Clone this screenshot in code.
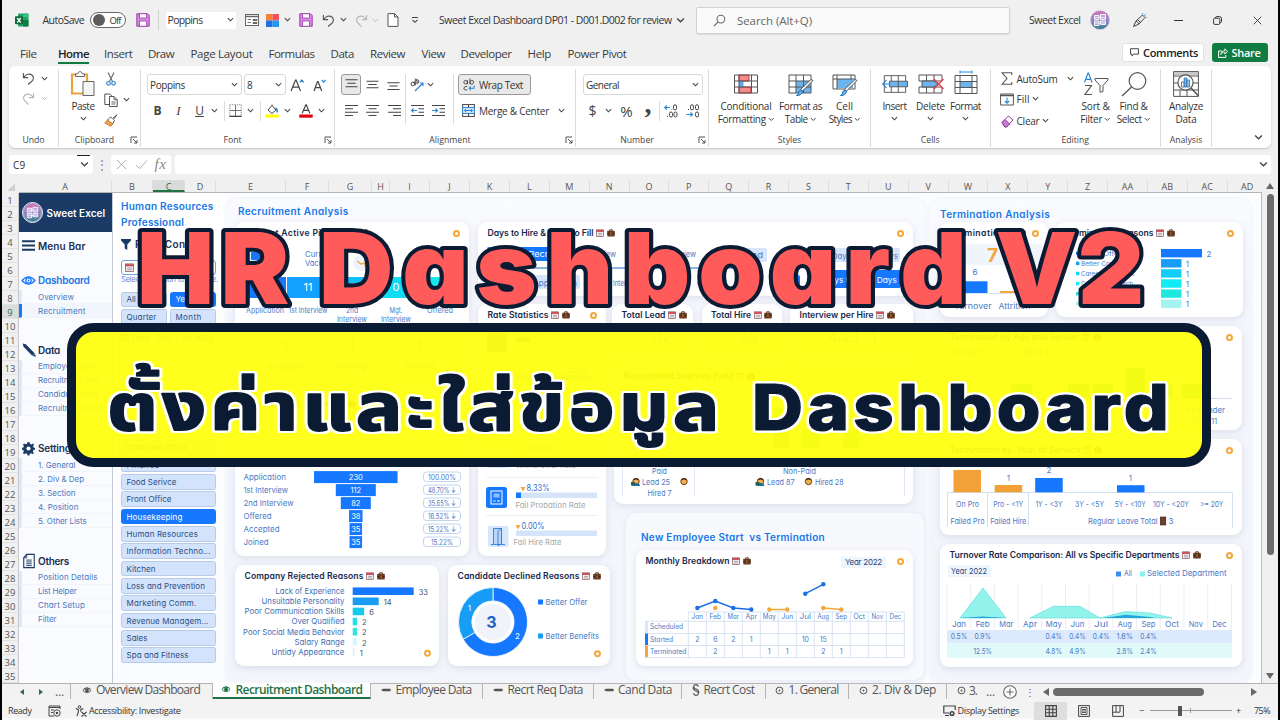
<!DOCTYPE html>
<html lang="th">
<head>
<meta charset="utf-8">
<title>HR Dashboard V2</title>
<style>
    html, body {
        margin: 0;
        padding: 0;
        overflow: hidden;
        background: #000;
    }
</style>
</head>
<body>
<excel-window>
    <title-bar></title-bar>
    <menu-tabs></menu-tabs>
    <excel-ribbon></excel-ribbon>
    <formula-bar></formula-bar>
    <work-sheet></work-sheet>
    <sheet-tabs></sheet-tabs>
    <status-bar></status-bar>
    <cover-title slot="overlay"></cover-title>
</excel-window>

<script>
const UI_FONT = '"Open Sans", "Noto Sans", sans-serif';
const DASH_FONT = 'Inter, "Open Sans", sans-serif';

// Base class: subclasses return css() and html(), rendered once on connect
class BaseElement extends HTMLElement {
    constructor() {
        super();
        this.attachShadow({ mode: 'open' });
    }

    connectedCallback() {
        this.shadowRoot.innerHTML = `<style>${this.css()}</style>${this.html()}`;
    }

    css() { return ':host { display: block; }'; }
    html() { return '<slot></slot>'; }
}

/* ---------- icons ---------- */

const G = '#444';
const B = '#2b88d8';
const ICONS = {
    excel: ['0 0 14 14', `<rect x="3" y=".5" width="10.5" height="13" rx="1" fill="#21a366"/><path d="M8 .5h4.5a1 1 0 0 1 1 1V4H8z" fill="#33c481"/><path d="M8 7h5.500v5.500a1 1 0 0 1-1 1H8z" fill="#107c41"/><rect x="0" y="3.200" width="8" height="8" rx=".8" fill="#0b6a37"/><path d="M2.200 5l3.600 4.600M5.800 5L2.200 9.600" stroke="#fff" stroke-width="1.300"/>`],
    save: ['0 0 14 14', `<path d="M.8.800h10.700l1.700 1.700v10.700H.8z" fill="#d78be0" stroke="#9a3fa8"/><rect x="3.500" y=".8" width="7" height="4.200" fill="#fff" stroke="#9a3fa8" stroke-width=".8"/><rect x="3.500" y="8" width="7" height="5.200" fill="#fff" stroke="#9a3fa8" stroke-width=".8"/>`],
    form: ['0 0 14 14', `<rect x=".5" y="1.500" width="13" height="11" fill="#fff" stroke="#666"/><path d="M.5 3.500h13" stroke="#666" stroke-width="1.500"/><path d="M2.500 6.500h3.500M2.500 9.500h3.500M8 6.500h4v1h-4zM8 9.500h4v1H8z" stroke="#666" stroke-width=".9"/>`],
    colors: ['0 0 14 14', `<path d="M0 0h7v7H0z" fill="#f58235"/><path d="M7 0h7v7H7z" fill="#f4525a"/><path d="M0 7h7v7H0z" fill="#1e6fe0"/><path d="M7 7h7v7H7z" fill="#2196f3"/>`],
    chev: ['0 0 8 6', `<path d="M1 1.300l3 3 3-3" fill="none" stroke="${G}" stroke-width="1.200"/>`],
    chevgray: ['0 0 8 6', `<path d="M1 1.300l3 3 3-3" fill="none" stroke="#bbb" stroke-width="1.200"/>`],
    undo: ['0 0 14 14', `<path d="M1.500 1v5h5M1.800 5.800C4 2.500 8 1 11 3.500c2.500 2.500 1 5.500-1 7L6.500 13.500" fill="none" stroke="#555" stroke-width="1.200"/>`],
    redo: ['0 0 14 14', `<path d="M12.500 1v5h-5M12.200 5.800C10 2.500 6 1 3 3.500c-2.500 2.500-1 5.500 1 7L7 13.500" fill="none" stroke="#b5b5b5" stroke-width="1.200"/>`],
    page: ['0 0 12 14', `<path d="M1 .6h6.500L11 4v9.400H1z" fill="#fff" stroke="#555"/><path d="M7.500.600V4H11" fill="none" stroke="#555"/>`],
    custom: ['0 0 8 8', `<path d="M1 1.500h6" stroke="${G}"/><path d="M1.500 3.800L4 6.300l2.500-2.500" fill="none" stroke="${G}" stroke-width="1.100"/>`],
    search: ['0 0 14 14', `<circle cx="8.500" cy="5.500" r="4.200" fill="none" stroke="#666" stroke-width="1.100"/><path d="M5.300 8.700L1 13" stroke="#666" stroke-width="1.200"/>`],
    avatar: ['0 0 20 20', `<defs><linearGradient id="av" x2="0" y2="1"><stop stop-color="#d873b8"/><stop offset=".55" stop-color="#8a86c2"/><stop offset="1" stop-color="#2f7f8e"/></linearGradient></defs><circle cx="10" cy="10" r="9.600" fill="url(#av)" stroke="#d9cfe6" stroke-width=".7"/><path d="M4.500 5.500h4.500v4H4.500zM10.500 4.500h5v5h-5zM4.500 11h4.500v4.500H4.500zM10.500 11h5v3.500h-5z" fill="#b9a5d8" stroke="#fff" stroke-width=".9"/><path d="M5 13h10M5 7.500h10" stroke="#fff" stroke-width=".7"/>`],
    pen: ['0 0 15 15', `<path d="M1.500 13.500L4 8l6.500-6 2.500 2.500L7 11zM4 8q1.500.5 3 3M5.500 6.800q2 .8 3 2.800" fill="none" stroke="${G}"/><path d="M10.500 1.500l.3-1.500M12 3l2-2.200M13.200 4.500h1.800" stroke="#55a8e0"/>`],
    min: ['0 0 9 9', `<path d="M0 4.500h9" stroke="#333"/>`],
    restore: ['0 0 9 9', `<rect x=".6" y="2.200" width="6.200" height="6.200" rx="1.200" fill="none" stroke="#333"/><path d="M2.500 1.800Q2.500.600 3.700.600H6.500Q8.500.600 8.500 2.500V5.400Q8.500 6.600 7.300 6.700" fill="none" stroke="#333"/>`],
    close: ['0 0 10 10', `<path d="M.8.800l8.400 8.400M9.200.800L.8 9.200" stroke="#333"/>`],
    comment: ['0 0 10 10', `<path d="M.6.800h8.800v6H4.200L2.200 9V6.800H.6z" fill="none" stroke="#333"/>`],
    share: ['0 0 10 10', `<path d="M4 3H.6v6.400h7.200V7" fill="none" stroke="#fff"/><path d="M2.800 6.500c.4-2.500 2-3.800 4-3.800V.800L9.600 3.500 6.800 6V4.200C5 4.200 3.600 5 2.800 6.500z" fill="none" stroke="#fff" stroke-width=".9"/>`],
    paste: ['0 0 26 26', `<path d="M2 3.500h15v19H2z" fill="#fff" stroke="#e8a33d" stroke-width="2.200"/><path d="M5.500 5.500V3h2q1-2.500 2.500-2.500T12.500 3h2v2.500z" fill="#fff" stroke="#666"/><path d="M13 10.500h11v14H13z" fill="#f6f6f6" stroke="#666"/>`],
    cut: ['0 0 10 14', `<path d="M2 .5l4.500 9M8 .5l-4.500 9" stroke="#666" stroke-width="1.100"/><circle cx="2.500" cy="11.300" r="1.800" fill="none" stroke="${B}" stroke-width="1.200"/><circle cx="7.500" cy="11.300" r="1.800" fill="none" stroke="${B}" stroke-width="1.200"/>`],
    copy: ['0 0 14 14', `<path d="M5 11.500H.8V1h5l2 2" fill="none" stroke="#555"/><path d="M5.500 3.500h4.500l3.200 3.200v6.800H5.500z" fill="#fff" stroke="#555"/><path d="M10 3.500v3.200h3.200M7.500 9h4M7.500 11h4" fill="none" stroke="#555" stroke-width=".9"/>`],
    painter: ['0 0 14 13', `<path d="M13 .8L8.500 4.500 6.500 3 3.500 6l5 4 2-3.500-1-1z" fill="#fff" stroke="#555"/><path d="M3.500 6L.8 9l6 3.300L8.500 10z" fill="#f2a65a" stroke="#d87a1a"/>`],
    growA: ['0 0 14 14', `<path d="M1 13L5.500 2h.6L10.500 13M2.600 9.200h6.300" fill="none" stroke="${G}" stroke-width="1.200"/><path d="M9.800 4.300L11.800 2l2 2.300" fill="none" stroke="${B}" stroke-width="1.200"/>`],
    shrinkA: ['0 0 14 14', `<path d="M2 13L5.500 3.500h.6L9.700 13M3.200 9.700h5.300" fill="none" stroke="${G}" stroke-width="1.200"/><path d="M9.800 2l1.900 2.200L13.600 2" fill="none" stroke="${B}" stroke-width="1.200"/>`],
    borders: ['0 0 14 14', `<path d="M.8.800h12.400v12.400H.8z" fill="none" stroke="#888" stroke-dasharray="1.500 1"/><path d="M7 1v12M1 7h12" stroke="#666"/><path d="M.5 13.300h13" stroke="#333" stroke-width="1.200"/>`],
    fill: ['0 0 14 14', `<path d="M3 6l4-4.500 4 4.500-4 3.500zM7 1.500V.5" fill="#fff" stroke="${G}"/><path d="M10.500 4q2 1 1.800 4.500" fill="none" stroke="${B}" stroke-width="1.500"/><path d="M.3 10.500h13.400v3.200H.3z" fill="#ffff00"/>`],
    fontcolor: ['0 0 14 14', `<path d="M3.200 9.300L6.800.800h.5l3.500 8.500M4.500 6.300h5" fill="none" stroke="${G}" stroke-width="1.200"/><path d="M.3 10.500h13.400v3.200H.3z" fill="#e3000f"/>`],
    vtop: ['0 0 14 14', `<path d="M.5 2h13M2.500 5.700h9M.5 9.300h13" stroke="${G}" stroke-width="1.100"/>`],
    vmid: ['0 0 14 14', `<path d="M.5 3.500h13M2.500 7h9M.5 10.500h13" stroke="${G}" stroke-width="1.100"/>`],
    vbot: ['0 0 14 14', `<path d="M.5 5h13M2.500 8.700h9M.5 12.300h13" stroke="${G}" stroke-width="1.100"/>`],
    left: ['0 0 13 13', `<path d="M0 1.500h13M0 4.800h8M0 8.200h13M0 11.500h8" stroke="${G}" stroke-width="1.100"/>`],
    center: ['0 0 13 13', `<path d="M0 1.500h13M2.500 4.800h8M0 8.200h13M2.500 11.500h8" stroke="${G}" stroke-width="1.100"/>`],
    right: ['0 0 13 13', `<path d="M0 1.500h13M5 4.800h8M0 8.200h13M5 11.500h8" stroke="${G}" stroke-width="1.100"/>`],
    orient: ['0 0 14 14', `<path d="M5 13L13 5M13 8V5h-3" fill="none" stroke="${B}" stroke-width="1.200"/><circle cx="2.800" cy="6" r="1.800" fill="none" stroke="${G}"/><circle cx="7" cy="3.500" r="1.800" fill="none" stroke="${G}"/><path d="M4.300 3.300l1.500 4M5 .5l3.200 4.500" stroke="${G}"/>`],
    outdent: ['0 0 13 13', `<path d="M0 1.500h13M7.500 4.800H13M7.500 8.200H13M0 11.500h13" stroke="${G}" stroke-width="1.100"/><path d="M6 6.500H.5M2.500 4.500l-2 2 2 2" fill="none" stroke="${B}" stroke-width="1.100"/>`],
    indent: ['0 0 13 13', `<path d="M0 1.500h13M7.500 4.800H13M7.500 8.200H13M0 11.500h13" stroke="${G}" stroke-width="1.100"/><path d="M0 6.500h5.500M3.500 4.500l2 2-2 2" fill="none" stroke="${B}" stroke-width="1.100"/>`],
    wrap: ['0 0 13 14', `<circle cx="2.800" cy="4.500" r="1.900" fill="none" stroke="${G}"/><path d="M4.900 2.500v4.200M7.500.500v6.200" stroke="${G}"/><circle cx="9.500" cy="4.600" r="2" fill="none" stroke="${G}"/><path d="M4.500 9.300q-3-1-3.500 1.500t3.500 2" fill="none" stroke="${G}"/><path d="M12 8v3H6.500M8.500 9l-2 2 2 2" fill="none" stroke="${B}" stroke-width="1.100"/>`],
    merge: ['0 0 13 13', `<rect x=".6" y=".6" width="11.800" height="11.800" fill="#fff" stroke="${G}"/><path d="M.6 3.500h11.800v6H.6z" fill="#cfe6fa" stroke="${B}"/><path d="M6.500.600v2.900M6.500 9.500v3" stroke="${G}"/><path d="M2.500 6.500h8M4 5L2.500 6.500 4 8M9 5l1.500 1.500L9 8" fill="none" stroke="${B}"/>`],
    decinc: ['0 0 14 14', `<path d="M6 3.500H.8M2.800 1.500l-2 2 2 2" fill="none" stroke="${B}" stroke-width="1.200"/><rect x="9.500" y=".8" width="3" height="5" rx="1.500" fill="none" stroke="${G}"/><rect x="5.500" y="8" width="3" height="5" rx="1.500" fill="none" stroke="${G}"/><rect x="10" y="8" width="3" height="5" rx="1.500" fill="none" stroke="${G}"/><path d="M3 12.500h1M7.500 5.500h.8" stroke="${G}"/>`],
    decdec: ['0 0 14 14', `<path d="M.5 10.500h6M4.500 8.500l2 2-2 2" fill="none" stroke="${B}" stroke-width="1.200"/><rect x="4.500" y=".8" width="3" height="5" rx="1.500" fill="none" stroke="${G}"/><rect x="9.500" y=".8" width="3" height="5" rx="1.500" fill="none" stroke="${G}"/><rect x="9.500" y="8" width="3" height="5" rx="1.500" fill="none" stroke="${G}"/><path d="M2 5.500h1" stroke="${G}"/>`],
    condfmt: ['0 0 26 26', `<path d="M1.500 4h23v18h-23z" fill="#fff"/><path d="M6 4h10v6H6zM6 16h12v6H6z" fill="#f48a8a" stroke="#d13438"/><path d="M6 10h4.500v6H6z" fill="#5aa9ea"/><path d="M1.500 4h23v18h-23zM1.500 10h23M1.500 16h23M6 4v18M18.500 4v18" fill="none" stroke="#555"/>`],
    fmttable: ['0 0 26 26', `<path d="M1 4h22v18H1z" fill="#fff"/><path d="M8 10h15v12H8z" fill="#6cb4ee"/><path d="M1 4h22v18H1zM1 10h22M1 16h22M8 4v18M15.500 4v18" fill="none" stroke="#555"/><path d="M25 9.500L14.500 20l-2-1.500L23 8.500z" fill="#fff" stroke="#555"/><path d="M14.500 20q-1 5-6 4.500 2.500-1 2.500-4 1-2.500 3.500-.5z" fill="#6cb4ee" stroke="#1d6fb8"/>`],
    cellstyle: ['0 0 26 26', `<path d="M1 4h22v18H1z" fill="#fff"/><path d="M5 8h16v9H5z" fill="#6cb4ee"/><path d="M1 4h22v14H1zM1 8h22M5 4v14M19 4v4" fill="none" stroke="#555"/><path d="M25 9.500L14.500 20l-2-1.500L23 8.500z" fill="#fff" stroke="#555"/><path d="M14.500 20q-1 5-6 4.500 2.500-1 2.500-4 1-2.500 3.500-.5z" fill="#6cb4ee" stroke="#1d6fb8"/>`],
    insert: ['0 0 28 26', `<path d="M2.500 4h24v18h-24z" fill="#fff"/><path d="M2.500 4h23v18h-23zM10 4v18M17.500 4v18" fill="none" stroke="#555"/><path d="M8 10h19.500v6H8z" fill="#6cb4ee" stroke="#555"/><path d="M17.500 10v6" stroke="#555"/><path d="M8 13H1M5 8.500L.8 13 5 17.500" fill="none" stroke="#2b88d8" stroke-width="1.200"/>`],
    delete: ['0 0 26 26', `<path d="M1 4h23v6H1zM1 16h23v6H1zM8.500 4v6M16 4v6M8.500 16v6M16 16v6" fill="#fff" stroke="#555"/><path d="M4 10h12l4 3-4 3H4z" fill="#6cb4ee" stroke="#555"/><path d="M16 8l9.500 10M25.500 8L16 18" stroke="#e8414d" stroke-width="1.300"/>`],
    format: ['0 0 26 26', `<path d="M2 4.500h22v18H2z" fill="#fff"/><path d="M7 10.500h12v6H7z" fill="#6cb4ee"/><path d="M2 4.500h22v18H2zM2 10.500h22M2 16.500h22M7 4.500v18M19 4.500v18" fill="none" stroke="#555"/><path d="M7 1h12M7-.5v3M19-.5v3" stroke="#2b88d8"/>`],
    sum: ['0 0 12 13', `<path d="M10.800 3V.8H1.200L6 6.500l-4.800 5.700h9.600V10" fill="none" stroke="#555" stroke-width="1.100"/>`],
    filldown: ['0 0 14 13', `<path d="M.6 1h12.800v11H.6z" fill="#fff" stroke="#555"/><path d="M.6 2.500h12.800" stroke="#555" stroke-width="1.500"/><path d="M7 4.500v6M4.800 8L7 10.300 9.200 8" fill="none" stroke="${B}" stroke-width="1.100"/>`],
    clear: ['0 0 13 13', `<path d="M1 7.500L7.500 1l4.500 4-6.500 7H4z" fill="#fff" stroke="#8a3a9a"/><path d="M1 7.500l3-3L8.500 9l-3 3H4z" fill="#c77fd2" stroke="#8a3a9a"/>`],
    sort: ['0 0 26 26', `<path d="M1.500 11.500L5 2h.5L9 11.500M2.700 8.300h5" fill="none" stroke="${B}" stroke-width="1.200"/><path d="M2 14.500h6.500L2 23.500h7" fill="none" stroke="#555" stroke-width="1.200"/><path d="M12 7.500h13v1.500l-5 5.500v6l-3 .8v-6.800L12 9z" fill="#fff" stroke="#555"/>`],
    find: ['0 0 26 26', `<circle cx="16.500" cy="10" r="8.300" fill="#fff" stroke="#555" stroke-width="1.200"/><path d="M10.500 16L1 25" stroke="#555" stroke-width="1.300"/>`],
    analyze: ['0 0 26 26', `<path d="M.6.600h24.800v24.800H.6z" fill="#fff" stroke="#555"/><path d="M1 2.500h24" stroke="#c8c8c8" stroke-width="3"/><path d="M.6 5h24.800M.6 12h24.800M.6 19h24.800M7 19v6M14 19v6" stroke="#555"/><circle cx="12.500" cy="11.500" r="7.600" fill="#fff" stroke="#555" stroke-width="1.200"/><path d="M8.500 11h2.600v5H8.500z" fill="#fff" stroke="#555" stroke-width=".8"/><path d="M11.200 7h2.600v9h-2.600z" fill="#6cb4ee" stroke="#2b6cb0" stroke-width=".8"/><path d="M14 9h2.500v7H14z" fill="#9ccbf2" stroke="#2b6cb0" stroke-width=".8"/><path d="M18 17l7.500 8" stroke="#555" stroke-width="1.600"/>`],
    launch: ['0 0 8 8', `<path d="M1 7V1h6" fill="none" stroke="#555"/><path d="M3 3l4 4M7 4v3H4" fill="none" stroke="#555"/>`],
    cross: ['0 0 12 12', `<path d="M1 1l10 10M11 1L1 11" stroke="#a8a8a8"/>`],
    tick: ['0 0 14 12', `<path d="M1 6.500l4 4L13 1.500" fill="none" stroke="#a8a8a8"/>`],
    eye: ['0 0 16 10', `<path d="M.8 5Q8-3 15.200 5 8 13 .8 5z" fill="#fff" stroke="#1677ff" stroke-width="1.400"/><circle cx="8" cy="5" r="3" fill="none" stroke="#1677ff" stroke-width="1.400"/><circle cx="8" cy="5" r="1" fill="#1677ff"/>`],
    burger: ['0 0 13 11', `<path d="M0 1.300h13M0 5.500h13M0 9.700h13" stroke="#1b3a66" stroke-width="1.900"/>`],
    pencil: ['0 0 14 14', `<path d="M.8.500l3 .8 9 9.200-2.500 2.300L1.500 3.700z" fill="#1b3a66"/><path d="M13 10.800l.8 3-3-.8z" fill="#1b3a66"/>`],
    gear: ['0 0 14 14', `<path d="M6 0h2l.5 2 1.500.6L11.700 1.600l1.200 1.200-1 1.700.600 1.500 1.500.4v1.700l-1.700.5-.6 1.500 1 1.700-1.300 1.300-1.700-1-1.300.6-.5 1.800H6l-.5-1.800-1.500-.6-1.700 1L1 11.800l1-1.700-.6-1.400L0 8.200V6.200l1.500-.4L2 4.400 1 2.800 2.400 1.500 4 2.400l1.500-.6z" fill="#1b3a66"/><circle cx="7" cy="7" r="2.200" fill="#fff"/>`],
    doc: ['0 0 13 16', `<path d="M4 .8h8.200v14.400H.8V4.500z" fill="#fff" stroke="#1b3a66" stroke-width="1.200"/><path d="M4 .8v3.700H.8M3.500 7h6M3.500 9h6M3.500 11h6M3.500 13h6" fill="none" stroke="#1b3a66"/>`],
    funnel: ['0 0 10 11', `<path d="M0 0h10v1.500L6.300 5.500V11L3.700 9.500v-4L0 1.500z" fill="#1b3a66"/>`],
    tabeye: ['0 0 10 8', `<path d="M.3 4Q5-1.500 9.700 4 5 9 .3 4z" fill="none" stroke="currentColor"/><circle cx="5" cy="4" r="2.200" fill="currentColor"/><path d="M1 2.300Q5-.8 9 2.300" fill="none" stroke="currentColor"/>`],
    tabpen: ['0 0 10 6', `<path d="M0 3l2-1.300h6.500q1.300 0 1.300 1.300T8.500 4.300H2z" fill="currentColor"/>`],
    tabclip: ['0 0 8 12', `<path d="M6.500 2.500Q5-.3 2.500 1 .5 3 3 4.500l2 1Q8 7.500 6 9.500M1.500 9.300Q3 12.300 5.500 11 7.500 9 5 7.500L3 6.500Q0 4.500 2 2.500" fill="none" stroke="currentColor" stroke-width="1.200"/>`],
    tabdot: ['0 0 9 9', `<circle cx="4.500" cy="4.500" r="3.400" fill="none" stroke="currentColor"/><circle cx="4.500" cy="4.500" r=".9" fill="currentColor"/>`],
    plus: ['0 0 14 14', `<circle cx="7" cy="7" r="6.300" fill="#fff" stroke="#666" stroke-width="1.100"/><path d="M3.500 7h7M7 3.500v7" stroke="#666" stroke-width="1.100"/>`],
    macro: ['0 0 13 12', `<path d="M12 4V1H1v10h5" fill="none" stroke="${G}"/><path d="M1 2.500h11M3 5h3M3 7.500h2" stroke="${G}"/><circle cx="9" cy="8" r="3.200" fill="#fff" stroke="${G}"/><circle cx="9" cy="8" r="1.300" fill="${G}"/>`],
    access: ['0 0 12 12', `<circle cx="4.500" cy="2" r="1.300" fill="none" stroke="${G}"/><path d="M.8 3.500l2.500 1.200v2.500L2 11M8.300 3.500L5.800 4.700v2M6.500 7l5 4.500M11.500 7l-5 4.500" fill="none" stroke="${G}" stroke-width="1.100"/>`],
    display: ['0 0 13 12', `<path d="M6 8H.8V1h11.400v4M2 10.500h4" fill="none" stroke="${G}" stroke-width="1.200"/><circle cx="9" cy="8.500" r="2.600" fill="${G}"/><circle cx="9" cy="8.500" r="1" fill="#fff"/>`],
    gridview: ['0 0 12 12', `<path d="M.6.600h10.800v10.800H.6zM.6 4.200h10.800M.6 7.800h10.800M4.200.600v10.800M7.800.600v10.800" fill="none" stroke="${G}" stroke-width="1.100"/>`],
    pageview: ['0 0 12 12', `<path d="M.6.600h10.800v10.800H.6z" fill="none" stroke="${G}"/><path d="M3 2.500h6v7H3zM4 4.500h4M4 6h4M4 7.500h4" fill="none" stroke="${G}" stroke-width=".9"/>`],
    breakview: ['0 0 12 12', `<path d="M.6.600h10.800v10.800H.6zM4 .6v6.500M8 .6v6.500M.6 7.200H8" fill="none" stroke="${G}"/>`],
    cal: ['0 0 8 8', `<rect x=".4" y=".8" width="7.200" height="6.800" fill="#f3e9ea" stroke="#8a5a5f" stroke-width=".7"/><path d="M.4 2h7.200" stroke="#c9444c" stroke-width="1.800"/><path d="M2 4.500h4M2 6h4" stroke="#8b96a3" stroke-width=".7"/>`],
    bag: ['0 0 8 8', `<path d="M2.700 2V.8h2.600V2" fill="none" stroke="#4a2616" stroke-width=".9"/><rect x=".2" y="1.800" width="7.600" height="5.800" rx=".8" fill="#6b3a22"/><path d="M.2 4.500h7.600" stroke="#3c1d10" stroke-width=".8"/><rect x="3.400" y="3.800" width="1.200" height="1.600" fill="#c99a3c"/>`]
};

class UiIcon extends BaseElement {
    css() {
        return `:host { display: block; flex: none; line-height: 0; } svg { display: block; overflow: visible; }`;
    }
    html() {
        const [box, body] = ICONS[this.getAttribute('name')];
        const w = this.getAttribute('w') || 14;
        const h = this.getAttribute('h') || w;
        return `<svg width="${w}" height="${h}" viewBox="${box}">${body}</svg>`;
    }
}

// ico('save', width, marginLeft, height)
const ico = (name, w, ml = 0, h = w) =>
    `<ui-icon name="${name}" w="${w}" h="${h}" style="margin-left:${ml}px"></ui-icon>`;
const chev = (ml = 0, w = 7) => ico('chev', w, ml, w * .75);
const fit = (text, w, ml = 0, extra = '') =>
    `<fit-text w="${w}" style="margin-left:${ml}px;${extra}">${text}</fit-text>`;

// One-line label whose tracking is tuned so that it fills a given width
class FitText extends BaseElement {
    css() { return ':host { display: block; flex: none; white-space: nowrap; }'; }
    connectedCallback() {
        super.connectedCallback();
        const target = parseFloat(this.getAttribute('w'));
        if (!target) return;
        const range = document.createRange();
        range.selectNodeContents(this);
        const natural = range.getBoundingClientRect().width;
        const count = this.textContent.length;
        this.style.letterSpacing = `${((target - natural) / count).toFixed(3)}px`;
        this.style.width = `${target}px`;
    }
}

/* ---------- window chrome ---------- */

class ExcelWindow extends BaseElement {
    css() {
        return `
            :host {
                display: grid;
                position: relative;
                box-sizing: border-box;
                width: 1280px;
                height: 720px;
                border: solid #000;
                border-width: 0 2px;
                background: #f0f0f0;
                grid-template-rows: 40px 26px 82px 32px 503px 16px 21px;
                font-family: ${UI_FONT};
                color: #333;
                overflow: hidden;
            }
        `;
    }
    html() { return '<slot></slot><slot name="overlay"></slot>'; }
}

class TitleBar extends BaseElement {
    css() {
        return `
            :host { display: flex; align-items: center; padding-left: 13px; font-size: 10.5px; }
            .toggle { box-sizing: border-box; display: flex; align-items: center; width: 35.500px; height: 16px; margin-left: 6px; padding-left: 2px; border: 1px solid #666; border-radius: 8px; background: #fff; font-size: 9.500px; }
            .knob { width: 12px; height: 12px; border-radius: 50%; background: #5c5c5c; }
            .line { width: 1px; height: 20px; margin-left: 8px; background: #d0d0d0; }
            .font { box-sizing: border-box; display: flex; align-items: center; width: 70px; height: 17px; margin-left: 7px; padding-left: 2px; background: #fff; border-radius: 2px; }
            .search { box-sizing: border-box; display: flex; align-items: center; width: 314px; height: 27px; margin-left: 11px; padding-left: 16px; background: #fafafa; border: 1px solid #d2d2d2; border-radius: 2px; color: #666; font-size: 11.500px; box-shadow: 0 1px 1px #ddd; }
        `;
    }
    html() {
        return `
            ${ico('excel', 14)}
            ${fit('AutoSave', 41.5, 13.5)}
            <div class="toggle"><div class="knob"></div>${fit('Off', 11, 4.5)}</div>
            ${ico('save', 14, 10)}
            <div class="line"></div>
            <div class="font">${fit('Poppins', 35)}${chev(24)}</div>
            ${ico('form', 14, 9)}
            ${ico('colors', 13, 7)}
            ${chev(5)}
            ${ico('save', 14, 8)}
            ${ico('undo', 13, 9)}
            ${chev(5)}
            ${ico('redo', 13, 8)}
            ${ico('chevgray', 7, 4, 5)}
            ${ico('page', 12, 8, 14)}
            ${ico('custom', 8, 12)}
            ${fit('Sweet Excel Dashboard DP01 - D001.D002 for review', 232.5, 20.5)}
            ${chev(4, 9)}
            <div class="search">${ico('search', 13)}${fit('Search (Alt+Q)', 75, 11.5)}</div>
            ${fit('Sweet Excel', 51.5, 19.5)}
            ${ico('avatar', 20, 9)}
            ${ico('pen', 15, 22)}
            ${ico('min', 9, 27)}
            ${ico('restore', 9, 30.5)}
            ${ico('close', 9, 30.5)}
        `;
    }
}

class MenuTabs extends BaseElement {
    css() {
        return `
            :host { display: flex; align-items: center; box-sizing: border-box; height: 26px; padding: 0 10px 0 0; font-size: 11.500px; color: #3b3b3b; }
            .home { font-weight: 600; color: #222; border-bottom: 2px solid #107c41; padding-top: 2px; line-height: 17px; }
            .btn { box-sizing: border-box; display: flex; align-items: center; height: 19px; margin-bottom: 1px; border-radius: 3px; font-weight: 600; color: #222; font-size: 11px; }
            .comments { width: 82px; margin-left: auto; padding-left: 7px; background: #fff; border: 1px solid #e2e2e2; }
            .share { width: 56px; margin-left: 8px; padding-left: 6px; background: #107c41; color: #fff; }
        `;
    }
    html() {
        const tabs = [
            ['File', 16.5, 18], ['Home', 31, 21.5], ['Insert', 28.5, 15], ['Draw', 26, 15.5],
            ['Page Layout', 62, 16.5], ['Formulas', 46, 16], ['Data', 23.5, 16], ['Review', 35, 16],
            ['View', 23.5, 16.5], ['Developer', 51, 15.5], ['Help', 23.5, 16], ['Power Pivot', 59, 16.5]
        ];
        return tabs.map(([t, w, ml]) =>
            `<fit-text ${t === 'Home' ? 'class="home"' : ''} w="${w}" style="margin-left:${ml}px">${t}</fit-text>`
        ).join('') + `
            <div class="btn comments">${ico('comment', 9)}${fit('Comments', 55, 4)}</div>
            <div class="btn share">${ico('share', 10)}${fit('Share', 29, 3.5)}</div>
        `;
    }
}

class RibbonGroup extends BaseElement {
    css() {
        return `
            :host { box-sizing: border-box; display: flex; flex-direction: column; border-right: 1px solid #dcdcdc; }
            .body { display: flex; flex: none; height: 63px; }
            .foot { display: flex; flex: none; align-items: center; height: 15px; font-size: 8.700px; color: #444; }
            .name { flex: 1; text-align: center; }
            ui-icon { width: 7px; margin-right: 3px; }
        `;
    }
    html() {
        return `
            <div class="body"><slot></slot></div>
            <div class="foot">
                <div class="name">${this.getAttribute('label') || ''}</div>
                ${this.hasAttribute('launcher') ? ico('launch', 8) : ''}
            </div>
        `;
    }
}

class BigButton extends BaseElement {
    css() {
        return `
            :host { display: flex; flex-direction: column; align-items: center; flex: none; font-size: 10px; }
            ui-icon { margin-top: 2px; }
            .row { display: flex; align-items: center; justify-content: center; height: 13px; }
            .row.first { margin-top: 2.500px; }
            .row ui-icon { margin-top: 0; }
        `;
    }
    html() {
        const [l1, w1] = (this.getAttribute('line1')).split('|');
        const second = this.getAttribute('line2');
        let row2 = chev(0, 7);
        if (second) {
            const [l2, w2] = second.split('|');
            row2 = fit(l2, w2) + (this.hasAttribute('plain') ? '' : chev(2, 6.5));
        }
        return `
            ${ico(this.getAttribute('icon'), 26)}
            <div class="row first">${fit(l1, w1)}</div>
            <div class="row">${row2}</div>
        `;
    }
}

class ExcelRibbon extends BaseElement {
    css() {
        return `
            :host { display: flex; box-sizing: border-box; height: 82px; margin: 0 7px; padding: 3px 0 1px; border-radius: 6px; background: #fff; box-shadow: 0 1px 2px #c4c4c4; font-size: 10px; }
            .stack { display: flex; flex-direction: column; gap: 5px; padding-top: 5px; }
            .row { display: flex; align-items: center; height: 21px; }
            .box { box-sizing: border-box; display: flex; align-items: center; justify-content: space-between; height: 21px; padding: 0 3px 0 2px; border: 1px solid #d9d9d9; border-radius: 3px; }
            .on { box-sizing: border-box; display: flex; align-items: center; height: 21px; border: 1px solid #9a9a9a; border-radius: 3px; background: #e9e9e9; }
            .sep { width: 1px; height: 20px; background: #dcdcdc; flex: none; }
            .tall { height: 50px; margin-top: 5px; }
            .tools { display: flex; flex-direction: column; }
            .tools > div { display: flex; align-items: center; }
            .glyph { width: 9px; text-align: center; font-size: 12px; line-height: 20px; color: #444; }
            .last { flex: 1; display: flex; align-items: flex-end; justify-content: flex-end; padding: 0 8px 6px 0; }
        `;
    }
    html() {
        return `
            <ribbon-group label="Undo" style="width:50px">
                <div class="tools">
                    <div style="height:19px">${ico('undo', 13, 13)}${chev(6)}</div>
                    <div style="height:21px">${ico('redo', 13, 13)}${ico('chevgray', 7, 6, 5)}</div>
                </div>
            </ribbon-group>
            <ribbon-group label="Clipboard" launcher style="width:82px">
                <big-button icon="paste" line1="Paste|23" style="margin-left:11px;width:26px"></big-button>
                <div class="tools" style="margin-left:8px">
                    <div style="height:20px">${ico('cut', 10, 2, 14)}</div>
                    <div style="height:21px">${ico('copy', 14)}${chev(5)}</div>
                    <div style="height:20px">${ico('painter', 14, 0, 13)}</div>
                </div>
            </ribbon-group>
            <ribbon-group label="Font" launcher style="width:194px">
                <div class="stack">
                    <div class="row">
                        <div class="box" style="width:95px;margin-left:6px">${fit('Poppins', 35)}${chev()}</div>
                        <div class="box" style="width:42px;margin-left:2px">8${chev()}</div>
                        ${ico('growA', 14, 4)}${ico('shrinkA', 14, 8)}
                    </div>
                    <div class="row">
                        <div class="glyph" style="margin-left:12px;font-weight:700">B</div>
                        <div class="glyph" style="margin-left:12px;font-family:'Liberation Serif',serif;font-style:italic;font-size:13px">I</div>
                        <div class="glyph" style="margin-left:12px;text-decoration:underline">U</div>
                        ${chev(7)}
                        <div class="sep" style="margin-left:6px"></div>
                        ${ico('borders', 13, 4)}${chev(5)}
                        <div class="sep" style="margin-left:6px"></div>
                        ${ico('fill', 14, 4)}${chev(5)}${ico('fontcolor', 14, 8)}${chev(5)}
                    </div>
                </div>
            </ribbon-group>
            <ribbon-group label="Alignment" launcher style="width:241px">
                <div class="stack" style="width:70px">
                    <div class="row">
                        <div class="on" style="width:20px;margin-left:6px">${ico('vtop', 13, 3)}</div>
                        ${ico('vmid', 13, 5)}${ico('vbot', 13, 8)}
                    </div>
                    <div class="row">${ico('left', 13, 10)}${ico('center', 13, 8)}${ico('right', 13, 9)}</div>
                </div>
                <div class="sep tall"></div>
                <div class="stack" style="width:47px">
                    <div class="row">${ico('orient', 14, 4)}${chev(3)}</div>
                    <div class="row">${ico('outdent', 13, 5)}${ico('indent', 13, 8)}</div>
                </div>
                <div class="sep tall"></div>
                <div class="stack">
                    <div class="row"><div class="on" style="width:73px;margin-left:4px">${ico('wrap', 12, 4, 13)}${fit('Wrap Text', 44, 4)}</div></div>
                    <div class="row">${ico('merge', 13, 8)}${fit('Merge &amp; Center', 70, 4)}${chev(9)}</div>
                </div>
            </ribbon-group>
            <ribbon-group label="Number" launcher style="width:133px">
                <div class="stack">
                    <div class="row"><div class="box" style="width:120px;margin-left:7px">${fit('General', 33)}${chev()}</div></div>
                    <div class="row">
                        <div class="glyph" style="margin-left:12px;font-size:14px">$</div>
                        ${chev(8)}
                        <div class="glyph" style="margin-left:8px;width:13px;font-size:15px">%</div>
                        <div class="glyph" style="margin-left:10px;width:10px;font-size:28px;font-weight:700;font-family:'Liberation Serif',serif;line-height:5px;height:20px">,</div>
                        <div class="sep" style="margin-left:6px"></div>
                        ${ico('decinc', 14, 4)}${ico('decdec', 14, 8)}
                    </div>
                </div>
            </ribbon-group>
            <ribbon-group label="Styles" style="width:162px">
                <big-button icon="condfmt" line1="Conditional|51" line2="Formatting|48" style="width:58px;margin-left:8px"></big-button>
                <big-button icon="fmttable" line1="Format as|43" line2="Table|23" style="width:43px;margin-left:4px"></big-button>
                <big-button icon="cellstyle" line1="Cell|17" line2="Styles|23" style="width:35px;margin-left:5px"></big-button>
            </ribbon-group>
            <ribbon-group label="Cells" style="width:119.500px">
                <big-button icon="insert" line1="Insert|24" style="width:27px;margin-left:10px"></big-button>
                <big-button icon="delete" line1="Delete|29" style="width:29px;margin-left:8px"></big-button>
                <big-button icon="format" line1="Format|31" style="width:31px;margin-left:5px"></big-button>
            </ribbon-group>
            <ribbon-group label="Editing" style="width:170.500px">
                <div class="tools" style="width:88px">
                    <div style="height:19px">${ico('sum', 12, 10, 13)}${fit('AutoSum', 41, 4)}${chev(9)}</div>
                    <div style="height:22px">${ico('filldown', 14, 9, 13)}${fit('Fill', 13, 3)}${chev(2)}</div>
                    <div style="height:22px">${ico('clear', 13, 10)}${fit('Clear', 23, 3)}${chev(2)}</div>
                </div>
                <big-button icon="sort" line1="Sort &amp;|28" line2="Filter|22" style="width:34px"></big-button>
                <big-button icon="find" line1="Find &amp;|28" line2="Select|25" style="width:34px;margin-left:4px"></big-button>
            </ribbon-group>
            <ribbon-group label="Analysis" style="width:51px">
                <big-button icon="analyze" line1="Analyze|34" line2="Data|21" plain style="width:50px"></big-button>
            </ribbon-group>
            <div class="last">${chev(0, 9)}</div>
        `;
    }
}

class FormulaBar extends BaseElement {
    css() {
        return `
            :host { display: flex; align-items: flex-start; padding: 7px 7px 0; font-size: 10px; }
            div { box-sizing: border-box; display: flex; align-items: center; height: 19px; background: #fff; border-radius: 3px; }
            .name { width: 84px; padding: 0 4px; justify-content: space-between; background: linear-gradient(#222, #222) 68px 0 / 13px 1px no-repeat #fff; }
            .dots { width: 17.500px; background: none; color: #888; font-size: 12px; justify-content: center; }
            .fn { width: 60px; padding-left: 5px; }
            .input { flex: 1; margin-left: 4px; justify-content: flex-end; padding-right: 3px; }
        `;
    }
    html() {
        return `
            <div class="name">${fit('C9', 12.5)}${chev(0, 9)}</div>
            <div class="dots">⋮</div>
            <div class="fn">${ico('cross', 11)}${ico('tick', 13, 8, 11)}${fit('fx', 12, 7, 'font:italic 15px Liberation Serif,serif;color:#888')}</div>
            <div class="input">${chev(0, 9)}</div>
        `;
    }
}

/* ---------- dashboard pieces ---------- */

class HrCard extends BaseElement {
    css() {
        return `
            :host { display: flex; flex-direction: column; background: #fff; border-radius: 9px; box-shadow: 0 2px 7px rgba(120, 130, 165, .2); font-family: ${DASH_FONT}; }
            header { display: flex; align-items: center; gap: 2.500px; height: 22px; flex: none; padding: 0 9px 0 9.500px; font-size: 8.600px; font-weight: 600; color: #16294d; }
            .ring { box-sizing: border-box; width: 7px; height: 7px; margin: 1px 0 0 auto; border: 2px solid #f2a73b; border-radius: 50%; }
        `;
    }
    html() {
        const w = this.getAttribute('w');
        const marks = this.hasAttribute('marks') ? ico('cal', 8, 0) + ico('bag', 8, 0) : '';
        const ring = this.hasAttribute('ring') ? '<div class="ring"></div>' : '';
        return `<header>${fit(this.getAttribute('heading'), w)}${marks}${ring}</header><slot></slot>`;
    }
}

// Svg chart drawn in sheet coordinates; box() is the part of the sheet it covers
class SheetChart extends BaseElement {
    css() {
        return `:host { display: block; line-height: 0; } svg { display: block; overflow: hidden; font-family: ${DASH_FONT}; }`;
    }
    html() {
        const [x, y, w, h] = this.box();
        return `<svg width="${w}" height="${h}" viewBox="${x} ${y} ${w} ${h}">${this.draw()}</svg>`;
    }
    text(x, y, s, o = {}) {
        const size = o.size || 8;
        const len = o.w ? `textLength="${o.w}" lengthAdjust="spacingAndGlyphs"` : '';
        return `<text x="${x}" y="${y + size * .36}" font-size="${size}" fill="${o.fill || '#4a7ac7'}" font-weight="${o.weight || 400}" text-anchor="${o.anchor || 'start'}" ${len}>${s}</text>`;
    }
    mid(x, y, s, o = {}) { return this.text(x, y, s, { ...o, anchor: 'middle' }); }
    rect(x, y, w, h, fill, extra = '') {
        return `<rect x="${x}" y="${y}" width="${w}" height="${h}" fill="${fill}" ${extra}/>`;
    }
    ring(x, y) { return `<circle cx="${x}" cy="${y}" r="2.500" fill="none" stroke="#f2a73b" stroke-width="1.900"/>`; }
    line(d, stroke = '#d9e3f2', w = 1) { return `<path d="${d}" fill="none" stroke="${stroke}" stroke-width="${w}"/>`; }
}

class PipelineChart extends SheetChart {
    box() { return [235, 244, 234, 140]; }
    draw() {
        const seg = [[244, 42, '#1677ff'], [287, 43, '#14a0ff'], [330.500, 42, '#12c0f8'], [373, 43, '#12dcf4'], [416.500, 43, '#14e8ea']];
        const n = ['230', '11', '7', '0', '0'];
        const top = ['Application', '1st Interview', '2nd', 'Mgt.', 'Offered'];
        const tw = [38, 39, 12, 13, 26];
        const cx = [265, 308, 352, 396, 440];
        return this.rect(246, 247, 18, 18, '#e3eefc', 'rx="9"') + this.rect(251, 252, 9, 8, '#1677ff', 'rx="1"')
            + '<circle cx="361" cy="263" r="8" fill="#eef3fb"/>' + this.line('M357 261l4 3 4-1v4', '#f2a73b', 1.3)
            + this.text(305, 254.5, 'Current', { w: 28 }) + this.text(305, 263.5, 'Vacancy', { w: 31 })
            + seg.map(([x, w, c], i) => this.rect(x, 277, w, 21, c) + this.mid(cx[i], 287.5, n[i], { size: 11, fill: '#fff' })).join('')
            + top.map((s, i) => this.mid(cx[i], 310, s, { w: tw[i], size: 7.5 })).join('')
            + this.mid(352, 319.5, 'Interview', { w: 30, size: 7.5 }) + this.mid(396, 319.5, 'Interview', { w: 30, size: 7.5 })
            + ['1', '1', '1'].map((s, i) => this.mid(285 + i * 67, 345, s, { size: 12, fill: '#6f7c93' })).join('')
            + this.mid(285, 366, 'Accepted', { w: 36 }) + this.mid(351, 366, 'Pending', { w: 30 }) + this.mid(419, 366, 'Declined', { w: 32 });
    }
}

class FunnelChart extends SheetChart {
    box() { return [235, 415, 234, 141]; }
    draw() {
        const rows = [
            ['Application', 42.5, 83.5, '230', '100.00%'], ['1st Interview', 44.5, 40, '112', '48.70% ↓'],
            ['2nd Interview', 50, 30, '82', '35.65% ↓'], ['Offered', 28, 13.500, '38', '16.52% ↓'],
            ['Accepted', 36, 12.500, '35', '15.22% ↓'], ['Joined', 25, 12.500, '35', '15.22%']
        ];
        return rows.map(([name, w, bar, n, pct], i) => {
            const y = 477 + i * 13;
            return this.text(243.5, y + .5, name, { w })
                + this.rect(355.8 - bar / 2, y - 5.9, bar, 12, '#1677ff')
                + this.mid(355.8, y + .3, n, { size: 7.5, fill: '#fff' })
                + this.rect(423.5, y - 5, 37, 9.5, '#fff', 'rx="3" stroke="#b3c9ea" stroke-width=".8"')
                + this.mid(442, y - .2, pct, { w: i === 5 ? 22 : 28, size: 7.5 });
        }).join('');
    }
}

class DaysChart extends SheetChart {
    box() { return [478, 244, 435, 52]; }
    draw() {
        const tab = (x, w, on, y) => this.rect(x, y, w, 14, on ? '#1677ff' : '#d6e5fb', 'rx="2"');
        const t = (x, y, s, w, fill) => this.mid(x, y, s, { w, fill });
        return tab(487, 78, true, 247) + t(526, 254.5, 'Current Recruit', 66, '#fff')
            + t(600, 254.5, 'Interview', 32) + t(680, 254.5, 'Interview', 32)
            + tab(727, 40, false, 248) + t(746, 255, 'Offered', 34)
            + tab(830, 70, false, 248) + t(865, 256, 'Days to Hire Days', 66)
            + this.line('M487 268h250', '#1d6cc8')
            + tab(530, 50, false, 275) + t(555, 283, 'Application', 44)
            + t(620, 283, '2nd Interview', 40) + t(712, 283, 'Offered', 30)
            + tab(770, 30, true, 275) + this.rect(820, 270, 80, 18, '#1677ff')
            + t(860, 280, 'Days to Fill 2 Days', 74, '#fff');
    }
}

class RateChart extends SheetChart {
    box() { return [478, 327, 128, 229]; }
    draw() {
        const row = (y, x, pct, label, w, fillw) =>
            `<path d="M${x - 5} ${y - 1.500}h5l-2.500 4.500z" fill="#f2a73b"/>`
            + this.text(x + 1, y - .5, pct, { w: 23, size: 9, fill: '#2f6fd0' })
            + this.rect(516, y + 4, 81, 5.500, '#d6e4fa') + this.rect(516, y + 4, fillw, 5.500, '#1677ff')
            + (label ? this.text(x - 10, y + 16.500, label, { w, fill: '#a8a8a8' }) : '');
        return this.rect(487, 333, 20, 19, '#7688a4') + this.rect(516, 337, 14, 5, '#7688a4') + this.text(536, 334, '11.11%', { w: 26 })
            + this.rect(516, 375, 75, 5, '#8db4ee') + this.text(568, 370, '2.11%', { w: 20 })
            + this.text(525, 449, '100.00%', { w: 32 }) + this.rect(488, 446, 20, 22, '#d6e4fa', 'rx="2"')
            + this.text(516, 465, 'Withdrawal Rate', { w: 60, fill: '#a8a8a8' })
            + this.line('M486 477.500h112M486 515.500h112', '#edf0f5')
            + this.rect(486, 487, 21, 21, '#1677ff', 'rx="2.500"')
            + '<rect x="491" y="491" width="11" height="13" fill="none" stroke="#fff"/><rect x="493.500" y="493.500" width="6" height="4" fill="#8fc0ff"/><path d="M493 501h3M497.500 500l2 2M499.500 500l-2 2" stroke="#fff" stroke-width=".8"/>'
            + row(488.5, 525.5, '8.33%', 'Fail Probation Rate', 70, 5)
            + this.rect(488, 526, 20.500, 21, '#d6e6fc', 'rx="2"')
            + '<path d="M491 544.500h14M493.500 544V528.500h8V544M498 531l3.500-2.500V544L498 545.500z" fill="#bcd6f8" stroke="#2f7de0" stroke-width=".9"/>'
            + row(526.5, 520.5, '0.00%', '', 0, 0)
            + this.text(513.5, 542.3, 'Fail Hire Rate', { w: 48, fill: '#a8a8a8' });
    }
}

class TotalValue extends BaseElement {
    css() { return `:host { display: block; padding-left: 38px; font: 600 14px/22px ${DASH_FONT}; color: #74a8e8; }`; }
}

class SourcesChart extends SheetChart {
    box() { return [614, 387, 299, 117]; }
    person(x, y, shirt) {
        return `<circle cx="${x}" cy="${y - .5}" r="3.200" fill="#f2b04a" stroke="#5b3410" stroke-width=".9"/><path d="M${x - 3.600} ${y - 1.500}q3.600-5 7.200 0l-3.600-1z" fill="#4a2a14"/>`
            + (shirt ? `<path d="M${x - 4} ${y + 4}q0-3 4-3t4 3z" fill="#1f6f9f"/><rect x="${x - 5}" y="${y}" width="4" height="3.500" fill="#2b5d50"/>` : '');
    }
    draw() {
        return this.rect(773, 408, 16, 40, '#7fc060') + this.rect(802, 430, 18, 18, '#7fc060') + this.rect(843, 430, 16, 18, '#7fc060')
            + this.line('M622.500 460v36M694.500 460v36M904.500 460v36', '#dfe6f1')
            + this.mid(659.5, 471.5, 'Paid', { w: 15 }) + this.person(636, 482, true) + this.text(642, 482, 'Lead 25', { w: 28 })
            + this.person(684, 482) + this.text(647.5, 492.7, 'Hired 7', { w: 24 })
            + this.mid(799.5, 471.5, 'Non-Paid', { w: 33 }) + this.person(760.5, 482, true) + this.text(767, 482, 'Lead 87', { w: 27.500 })
            + this.person(808.5, 482) + this.text(815, 482, 'Hired 28', { w: 28.500 });
    }
}

class RejectedChart extends SheetChart {
    box() { return [235, 587, 204, 79]; }
    draw() {
        const rows = [
            ['Lack of Experience', 69, 61, 33, '#1677ff'], ['Unsuitable Personality', 83, 26, 14, '#179df5'],
            ['Poor Communication Skills', 100, 11.500, 6, '#17c9ee'], ['Over Qualified', 53, 4.300, 2, '#1fe3ea'],
            ['Poor Social Media Behavior', 101.500, 4.300, 2, '#2fe6dc'], ['Salary Range', 50, 4.300, 2, '#d9f7fa'],
            ['Untidy Appearance', 73, 2, 1, '#e6eefa']
        ];
        return rows.map(([name, w, bar, n, c], i) => {
            const y = 591.2 + i * 10.12;
            return this.text(344.5, y, name, { w, anchor: 'end', fill: '#3f6fb5' })
                + this.rect(352.7, y - 3.8, bar, 7.6, c)
                + this.text(352.7 + bar + 5, y + 1, n, { size: 7.500, fill: '#456' });
        }).join('') + this.ring(427.5, 653.3);
    }
}

class DeclinedChart extends SheetChart {
    box() { return [448, 587, 162, 79]; }
    draw() {
        const cx = 493, cy = 622;
        const p = (r, deg) => {
            const a = (deg - 90) * Math.PI / 180;
            return `${(cx + r * Math.cos(a)).toFixed(2)} ${(cy + r * Math.sin(a)).toFixed(2)}`;
        };
        const arc = (a, b, big, c) =>
            `<path d="M${p(34.5, a)}A34.500 34.500 0 ${big} 1 ${p(34.5, b)}L${p(21, b)}A21 21 0 ${big} 0 ${p(21, a)}z" fill="${c}" stroke="#fff" stroke-width=".8"/>`;
        return arc(0, 240, 1, '#1677ff') + arc(240, 360, 0, '#179df5')
            + `<circle cx="${cx}" cy="${cy}" r="18" fill="#f0f3fa"/>`
            + this.mid(491.5, 622.5, '3', { size: 16, weight: 700, fill: '#1c62c4' })
            + this.mid(469.5, 608, '1', { fill: '#fff' }) + this.mid(517.5, 636, '2', { fill: '#fff' })
            + this.rect(538, 599.5, 5, 5, '#1677ff') + this.text(545.5, 601.7, 'Better Offer', { w: 42 })
            + this.rect(538, 633.5, 5, 5, '#179df5') + this.text(545.5, 635.7, 'Better Benefits', { w: 53.500 })
            + this.ring(597.5, 653.8);
    }
}

const MONTHS = ['Jan', 'Feb', 'Mar', 'Apr', 'May', 'Jun', 'Jul', 'Aug', 'Sep', 'Oct', 'Nov', 'Dec'];

class MonthlyChart extends SheetChart {
    box() { return [636, 572, 277, 94]; }
    draw() {
        const X = i => 697.3 + i * 18;
        const rows = [
            ['Scheduled', 33, 626.8, '#d9e6fb', {}],
            ['Started', 23, 639.2, '#1677ff', { 0: 2, 1: 6, 2: 2, 3: 1, 6: 10, 7: 15 }],
            ['Terminated', 36.5, 651.3, '#f2a73b', { 1: 2, 4: 1, 5: 1, 7: 2, 8: 1 }]
        ];
        const series = (pts, c) => this.line('M' + pts.map(([i, y]) => `${X(i)} ${y}`).join('L'), c, 1.5)
            + pts.map(([i, y]) => `<circle cx="${X(i)}" cy="${y}" r="2.200" fill="${c}"/>`).join('');
        let grid = 'M688.300 612h216.200M645 621.300h259.500M645 633.500h259.500M645 645.500h259.500M645 657.700h259.500';
        for (let i = 0; i <= 12; i++) grid += `M${688.3 + i * 18} 612v45.700`;
        return this.line(grid, '#cfdcf0', .8)
            + MONTHS.map((m, i) => this.mid(X(i), 616.8, m, { size: 7, w: m === 'May' ? 13 : 11.5 })).join('')
            + rows.map(([name, w, y, c, vals]) => this.rect(645, y - 5.7, 3, 11.5, c)
                + this.text(650, y, name, { w, size: 7 })
                + Object.entries(vals).map(([i, v]) => this.mid(X(+i), y, v, { size: 7 })).join('')).join('')
            + series([[0, 608], [1, 601], [2, 608], [3, 609.5]], '#1b6fe8')
            + series([[6, 593.7], [7, 584.3]], '#1b6fe8')
            + series([[1, 608]], '#f2a73b') + series([[4, 609.5], [5, 609.5]], '#f2a73b')
            + series([[7, 608], [8, 609.5]], '#f2a73b');
    }
}

class TurnoverChart extends SheetChart {
    box() { return [940, 244, 108, 73]; }
    draw() {
        return this.rect(946, 243, 96, 22, '#f0f4fb')
            + this.mid(992.5, 255, '7', { size: 19, weight: 700, fill: '#f2a73b' })
            + this.mid(975, 272.5, '6') + this.mid(1012, 284, '1')
            + this.rect(950, 281.3, 37.500, 12, '#1677ff') + this.rect(1000, 291, 22, 2.200, '#f2a73b')
            + this.line('M946 293.500h96')
            + this.text(954, 305.7, 'Turnover', { w: 37.5 }) + this.text(998.5, 305.7, 'Attrition', { w: 32 });
    }
}

class ReasonsChart extends SheetChart {
    box() { return [1056, 244, 187, 73]; }
    draw() {
        const c = ['#1677ff', '#179df5', '#12cffa', '#12eaf4', '#1fe8df', '#a5f3f0'];
        const names = ['Better Offer', 'Better Commute', 'Career Movement', 'Culture Mismatch', 'Health', 'Others'];
        const w = [40, 50, 53, 52, 22, 20];
        return names.map((s, i) => {
            const y = 253.3 + i * 10.1;
            return this.rect(1076, y - 1.7, 3.400, 3.400, c[i]) + this.text(1081, y + .2, s, { w: w[i], size: 6 })
                + this.rect(1161, y - 4.3, i ? 20.5 : 41, 8.4, c[i])
                + this.mid(i ? 1187.5 : 1209, y + .5, i ? '1' : '2');
        }).join('');
    }
}

class AgeChart extends SheetChart {
    box() { return [940, 347, 302, 83]; }
    draw() {
        const bars = [[1011, 384, 21], [1068, 384, 21], [1093, 384, 20], [1126, 368, 19], [1152, 384, 20], [1182, 384, 20]];
        return this.text(952, 352.5, 'Women 1', { w: 32 }) + this.text(1024, 352.5, 'Men 11', { w: 28 })
            + bars.map(([x, y, w]) => this.rect(x, y, w, 398 - y, '#4fbf60')).join('')
            + this.line('M946 398.500h286', '#d3dceb')
            + this.text(1186, 410.5, 'All Gender', { w: 39 }) + this.text(1193, 421, 'Total 11', { w: 24 });
    }
}

class ServiceChart extends SheetChart {
    box() { return [940, 461, 302, 74]; }
    draw() {
        const names = ['On Pro', 'Pro - &lt;1Y', '1Y - &lt;3Y', '3Y - &lt;5Y', '5Y - &lt;10Y', '10Y - &lt;20Y', '&gt;= 20Y'];
        const w = [23, 30, 27, 29, 31, 36, 23];
        return this.line('M947.500 527V492.500H1232.500V528M987.500 492.500V526.500M1028.500 492.500V526.500', '#d3e0f2')
            + this.rect(953.5, 470, 27.500, 22.300, '#f2a136') + this.rect(994.7, 485, 27.500, 7.300, '#f2a136')
            + this.rect(1035.2, 478, 27.500, 14.300, '#1677ff') + this.rect(1117, 485.2, 27.500, 7.200, '#1677ff')
            + this.mid(1008.3, 477.8, '1') + this.mid(1049, 470, '2') + this.mid(1130.5, 477.8, '1')
            + names.map((s, i) => this.mid(967.5 + i * 40.7, 504.3, s, { w: w[i] })).join('')
            + this.mid(967.5, 521, 'Failed Pro', { w: 34 }) + this.mid(1008.2, 521, 'Failed Hire', { w: 36 })
            + this.text(1088, 521, 'Regular Leave Total', { w: 69.5 })
            + this.rect(1160.3, 517, 5.500, 8, '#6e3f26', 'stroke="#3c1d10" stroke-width=".6"') + this.text(1168.5, 521, '3');
    }
}

class CompareChart extends SheetChart {
    box() { return [940, 565, 302, 102]; }
    draw() {
        const X = i => 959 + i * 23.68;
        let grid = '';
        for (let i = 0; i <= 12; i++) grid += `M${947 + i * 23.7} 584v45`;
        const r1 = { 0: '0.5%', 1: '0.9%', 4: '0.4%', 5: '0.4%', 6: '0.4%', 7: '1.6%', 8: '0.4%' };
        const r2 = { 1: '12.5%', 4: '4.8%', 5: '4.9%', 7: '2.8%', 8: '2.4%' };
        const cells = (r, y) => Object.entries(r).map(([i, v]) => this.mid(X(+i), y, v, { w: v.length > 4 ? 18.5 : 16.5 })).join('');
        return this.rect(948, 565, 43, 12, '#eff5fd') + this.text(951, 570.8, 'Year 2022', { w: 36, fill: '#28477e' })
            + this.rect(1116, 571.5, 5, 5, '#3b8cf5') + this.text(1124, 573.5, 'All', { w: 8 })
            + this.rect(1140, 571.5, 5, 5, '#8df2e8') + this.text(1147, 573.5, 'Selected Department', { w: 79.5 })
            + this.line(grid, '#e8edf5')
            + '<path d="M960 618L983 588 1006 618zM1030 618L1053.500 606.300H1080L1100 618zM1100 618L1125.500 611.500 1150 613 1172 618z" fill="#92f3ec" stroke="#55dcd6" stroke-width=".6"/>'
            + '<path d="M960 618L983 616.500 1006 618zM1103 618L1126 614.800 1150 617 1155 618z" fill="#26a5dc"/>'
            + MONTHS.map((m, i) => this.mid(X(i), 623.8, m, { w: m === 'May' ? 16 : 14 })).join('')
            + this.rect(947, 630, 285, 13.300, '#dde9fc') + this.rect(947, 643.3, 285, 14.700, '#dffaf9')
            + cells(r1, 636.2) + cells(r2, 651);
    }
}

class SideMenu extends BaseElement {
    css() {
        return `
            :host { box-sizing: border-box; background: #fafbff; border-right: 1px solid #c4cad6; font-family: ${DASH_FONT}; }
            .brand { display: flex; align-items: center; height: 39px; padding-left: 3px; background: #1b3a66; color: #fff; font-size: 10px; font-weight: 600; }
            .logo { display: flex; border: 1px solid #fff; border-radius: 50%; }
            .head { display: flex; align-items: center; height: 19.500px; padding-left: 2px; color: #1b2f55; font-size: 10px; font-weight: 600; }
            .head ui-icon { width: 15px; display: flex; justify-content: center; }
            .on { color: #1677e8; }
            .item { box-sizing: border-box; display: flex; align-items: center; height: 14px; padding-left: 16px; border-left: 3px solid #dce8fb; border-bottom: 1px solid #f1f4fa; color: #4c78bd; font-size: 8px; }
            .sel { border-left-color: #1677ff; background: #f1f5fc; }
            .gap { height: 23px; }
        `;
    }
    html() {
        const head = (icon, w, h, text, tw, cls = '') =>
            `<div class="head ${cls}">${ico(icon, w, 0, h)}${fit(text, tw, 2)}</div>`;
        const items = list => list.map(([t, w]) =>
            `<div class="item ${t === 'Recruitment' ? 'sel' : ''}">${fit(t, w)}</div>`).join('');
        return `
            <div class="brand"><div class="logo">${ico('avatar', 19)}</div>${fit('Sweet Excel', 58.5, 3.5)}</div>
            <div style="height:4px"></div>
            ${head('burger', 13, 11, 'Menu Bar', 47.5)}
            <div style="height:15px"></div>
            ${head('eye', 15, 9, 'Dashboard', 51.5, 'on')}
            ${items([['Overview', 36], ['Recruitment', 47.5]])}
            <div class="gap" style="height:22px"></div>
            ${head('pencil', 14, 14, 'Data', 22)}
            ${items([['Employee Data', 58], ['Recruitment Req.', 63], ['Candidate Data', 60], ['Recruitment Cost', 66]])}
            <div class="gap"></div>
            ${head('gear', 13, 13, 'Settings', 38)}
            ${items([['1. General', 37.5], ['2. Div &amp; Dep', 46], ['3. Section', 37.5], ['4. Position', 40.5], ['5. Other Lists', 48.5]])}
            <div class="gap"></div>
            ${head('doc', 12, 16, 'Others', 31)}
            ${items([['Position Details', 59.5], ['List Helper', 38.5], ['Chart Setup', 47], ['Filter', 18.5]])}
        `;
    }
}

class SlicerPane extends BaseElement {
    css() {
        return `
            :host { box-sizing: border-box; padding: 6px 10px 0 8px; background: linear-gradient(#fff, #fbfcff); font-family: ${DASH_FONT}; font-size: 8px; color: #2c4d82; }
            .title { font-size: 10px; font-weight: 600; line-height: 15.500px; color: #1677e8; }
            .filter { display: flex; align-items: center; height: 20px; margin-top: 4px; font-size: 10px; font-weight: 600; color: #1b2f55; }
            .search { box-sizing: border-box; display: flex; align-items: center; height: 15px; margin-top: 6px; padding-left: 3px; border: 1px solid #6f9fdc; border-radius: 3px; }
            .hint { height: 9px; line-height: 9px; font-size: 7.500px; color: #4c8be0; }
            .pair { display: grid; grid-template-columns: 46px 46px; column-gap: 3px; row-gap: 2px; margin-top: 7.500px; }
            .opt { box-sizing: border-box; display: flex; align-items: center; height: 15.500px; padding-left: 4.500px; border: 1px solid #b7cbe9; border-radius: 2.500px; background: #d3e3fc; }
            .opt.on { background: #1677ff; border-color: #1677ff; color: #fff; }
            .date { display: flex; height: 115px; padding-top: 8px; box-sizing: border-box; }
            .list { display: flex; flex-direction: column; gap: 1.840px; }
        `;
    }
    html() {
        const depts = [
            ['Executive Office', 61], ['Finance', 33], ['Food Serivce', 50], ['Front Office', 45], ['Housekeeping', 56],
            ['Human Resources', 71.5], ['Information Techno...', 84], ['Kitchen', 29], ['Loss and Prevention', 78.5],
            ['Marketing Comm.', 70], ['Revenue Managem...', 82], ['Sales', 21], ['Spa and Fitness', 62]
        ];
        return `
            <div class="title">${fit('Human Resources', 92.5)}${fit('Professional', 63)}</div>
            <div class="filter">${ico('funnel', 10, 0, 11)}${fit('Filter Control', 68, 4)}</div>
            <div class="search">${ico('cal', 9)}${fit('This Year', 36, 4)}</div>
            <div class="hint">${fit('Select an option to filter one.', 97)}</div>
            <div class="pair">
                <div class="opt">${fit('All', 9)}</div><div class="opt on">${fit('Year', 17)}</div>
                <div class="opt">${fit('Quarter', 30)}</div><div class="opt">${fit('Month', 26)}</div>
            </div>
            <div class="date">${ico('cal', 8)}${fit('Date:&nbsp;&nbsp;Thu, 7 Jul 2022', 81, 3)}</div>
            <div class="list">
                ${depts.map(([t, w]) => `<div class="opt ${t === 'Housekeeping' ? 'on' : ''}">${fit(t, w)}</div>`).join('')}
            </div>
        `;
    }
}

class RecruitPanel extends BaseElement {
    css() {
        return `
            :host { box-sizing: border-box; margin-top: 6px; padding: 0 9px; border-radius: 10px; background: linear-gradient(#fafbff, #f5f6fc 20%, #f3f5fb); box-shadow: 0 0 4px #e8ecf6; font-family: ${DASH_FONT}; }
            .title { height: 23px; display: flex; align-items: center; padding-left: 3px; font-size: 10px; font-weight: 600; color: #1677e8; }
            .grid { display: grid; grid-template-columns: 204px 9px 21px 9px 128px 4px 4px 22px 277px; grid-template-rows: 74px 8px 52px 9px 19px 9px 111px 9px 37px 6px 9px 101px; }
            .totals { grid-area: 3 / 8 / 4 / 10; display: flex; gap: 8.500px; }
            .panel { grid-area: 9 / 8 / 13 / 10; margin: 0 -11px -14px 12px; border-radius: 10px; background: #f8f9fd; box-shadow: 0 0 5px #e2e7f2; }
            .second { grid-area: 9 / 9 / 10 / 10; height: 47px; padding-left: 5px; }
            .year { display: flex; justify-content: center; width: 45px; height: 11px; margin: -15px 0 4px 205px; line-height: 11px; background: #eff5fd; color: #28477e; font-size: 8px; }
            total-value { flex: none; }
        `;
    }
    html() {
        return `
            <div class="title">${fit('Recruitment Analysis', 110.5)}</div>
            <div class="grid">
                <hr-card heading="Current Active Pipeline" w="104" marks ring style="grid-area:1/1/6/4"><pipeline-chart></pipeline-chart></hr-card>
                <hr-card heading="Days to Hire &amp; Days to Fill" w="106" marks ring style="grid-area:1/5/2/10"><days-chart></days-chart></hr-card>
                <hr-card heading="Rate Statistics" w="61" marks ring style="grid-area:3/5/11/6"><rate-chart style="margin-top:1px"></rate-chart></hr-card>
                <div class="totals">
                    <hr-card heading="Total Lead" w="44" marks style="width:81px;margin-left:-2px"><total-value>112</total-value></hr-card>
                    <hr-card heading="Total Hire" w="40" marks style="width:80px"><total-value>35</total-value></hr-card>
                    <hr-card heading="Interview per Hire" w="74" marks style="flex:1"><total-value>4.23 : 1</total-value></hr-card>
                </div>
                <hr-card heading="Recruitment Sources Yield" w="110" marks style="grid-area:5/8/8/10"><sources-chart></sources-chart></hr-card>
                <hr-card heading="Recruitment Funnel" w="90" marks style="grid-area:7/1/11/4"><funnel-chart></funnel-chart></hr-card>
                <div class="panel"></div>
                <div class="title second">${fit('New Employee Start&nbsp; vs Termination', 184)}</div>
                <hr-card heading="Monthly Breakdown" w="84" marks ring style="grid-area:10/9/13/10"><div class="year">${fit('Year 2022', 37)}</div><monthly-chart></monthly-chart></hr-card>
                <hr-card heading="Company Rejected Reasons" w="119" marks style="grid-area:12/1/13/2"><rejected-chart></rejected-chart></hr-card>
                <hr-card heading="Candidate Declined Reasons" w="122" marks style="grid-area:12/3/13/7"><declined-chart></declined-chart></hr-card>
            </div>
        `;
    }
}

class TerminationPanel extends BaseElement {
    css() {
        return `
            :host { box-sizing: border-box; margin-top: 6px; padding: 0 8px 0 10px; border-radius: 10px; background: linear-gradient(#fafbff, #f5f6fc 20%, #f3f5fb); box-shadow: 0 0 4px #e8ecf6; font-family: ${DASH_FONT}; }
            .title { display: flex; align-items: center; height: 23px; font-size: 10px; font-weight: 600; color: #1677e8; }
            .title fit-text { padding-top: 7px; }
            .grid { display: grid; grid-template-columns: 108px 187px; column-gap: 8px; grid-template-rows: 95px 104px 96px 123px; row-gap: 9px; }
            .wide { grid-column: 1 / 3; width: 302px; }
            .compare { margin-left: 0; }
        `;
    }
    html() {
        return `
            <div class="title">${fit('Termination Analysis', 110)}</div>
            <div class="grid">
                <hr-card heading="Termination" w="55" marks ring><turnover-chart></turnover-chart></hr-card>
                <hr-card heading="Termination Reasons" w="88" marks ring><reasons-chart></reasons-chart></hr-card>
                <hr-card class="wide" heading="Termination by Age and Gender" w="130" marks ring><age-chart style="margin-top:-1px"></age-chart></hr-card>
                <hr-card class="wide" heading="Termination by. Year of Service" w="131" marks ring><service-chart></service-chart></hr-card>
                <hr-card class="wide" heading="Turnover Rate Comparison: All vs Specific Departments" w="230" marks ring><compare-chart style="margin-top:-1px"></compare-chart></hr-card>
            </div>
        `;
    }
}

/* ---------- worksheet ---------- */

class WorkSheet extends BaseElement {
    css() {
        return `
            :host { display: grid; grid-template-columns: 17px 1243px 16px; grid-template-rows: 13px 490px; overflow: hidden; }
            .corner { background: linear-gradient(135deg, transparent 60%, #cfcfcf 60%) 4px 2px / 9px 9px no-repeat; }
            .cols { display: flex; border-bottom: 1px solid #b5b5b5; box-sizing: border-box; font-size: 9px; line-height: 13px; color: #555; overflow: hidden; }
            .cols div { box-sizing: border-box; flex: none; text-align: center; border-right: 1px solid #dedede; }
            .cols .on { background: #d9dcdb; color: #217346; border-bottom: 2px solid #217346; }
            .rows { font-size: 9.500px; color: #555; border-right: 1px solid #c9c9c9; box-sizing: border-box; }
            .rows div { box-sizing: border-box; height: 14px; line-height: 15px; text-align: center; border-bottom: 1px solid #e2e2e2; }
            .rows .on { background: #d9dcdb; color: #217346; }
            .sheet { display: grid; grid-template-columns: 94px 113px 699px 5px 321px; height: 490px; background: #fcfdff; overflow: hidden; border-right: 1px solid #bbb; box-sizing: border-box; }
            .sheet recruit-panel { grid-column: 3; }
            .sheet termination-panel { grid-column: 5; }
            .scroll { grid-area: 1 / 3 / 3 / 4; display: flex; flex-direction: column; align-items: center; padding-top: 3px; }
            .up, .down { border: 4px solid transparent; border-top: 0; border-bottom: 6px solid #666; }
            .down { border-bottom: 0; border-top: 6px solid #666; margin-top: 118px; }
            .thumb { width: 7px; height: 361px; margin-top: 5px; border-radius: 4px; background: #6b6b6b; }
        `;
    }
    html() {
        const first = { A: 93, B: 41, C: 32, D: 31, E: 70, F: 43, G: 43, H: 18, I: 40, J: 40 };
        const rest = 'K L M N O P Q R S T U V W X Y Z AA AB AC AD'.split(' ');
        const cols = [...Object.entries(first), ...rest.map(c => [c, 39.88])];
        const rows = Array.from({ length: 35 }, (_, i) => i + 1);
        return `
            <div class="corner"></div>
            <div class="cols">${cols.map(([c, w]) => `<div class="${c === 'C' ? 'on' : ''}" style="width:${w}px">${c}</div>`).join('')}</div>
            <div class="rows">${rows.map(r => `<div class="${r === 9 ? 'on' : ''}">${r}</div>`).join('')}</div>
            <div class="sheet">
                <side-menu></side-menu>
                <slicer-pane></slicer-pane>
                <recruit-panel></recruit-panel>
                <termination-panel></termination-panel>
            </div>
            <div class="scroll"><div class="up"></div><div class="thumb"></div><div class="down"></div></div>
        `;
    }
}

class SheetTabs extends BaseElement {
    css() {
        return `
            :host { display: flex; align-items: center; height: 16px; background: #f2f2f2; border-top: 1px solid #b5b5b5; box-sizing: border-box; font-size: 12px; color: #555; line-height: 14px; }
            .nav { border: 3.500px solid transparent; border-right: 4.500px solid #217346; border-left: 0; }
            .nav.r { border-left: 4.500px solid #217346; border-right: 0; }
            .tab { box-sizing: border-box; display: flex; align-items: center; flex: none; height: 15px; padding-bottom: 3px; border-right: 1px solid #b5b5b5; }
            .active { background: #fff; color: #1e7145; font-weight: 600; border-bottom: 2px solid #1e7145; height: 16px; margin-top: -1px; padding-bottom: 1px; }
            .arr { border: 4px solid transparent; border-right: 6px solid #666; border-left: 0; margin-left: 8px; }
            .arr.r { border-left: 6px solid #666; border-right: 0; margin-left: 47px; }
            .thumb { width: 151px; height: 8px; border-radius: 4px; background: #6b6b6b; margin-left: 4px; }
        `;
    }
    html() {
        const tab = (w, icon, iw, ih, pad, gap, text, tw, cls = '') =>
            `<div class="tab ${cls}" style="width:${w}px">${ico(icon, iw, pad, ih)}${fit(text, tw, gap)}</div>`;
        return `
            <div class="nav" style="margin-left:18px"></div>
            <div class="nav r" style="margin-left:14.500px"></div>
            ${fit('...', 9, 12.5)}
            <div class="tab" style="width:7px"></div>
            ${tab(142, 'tabeye', 10, 7, 11, 4, 'Overview Dashboard', 104)}
            ${tab(158, 'tabeye', 10, 7, 8, 4.5, 'Recruitment Dashboard', 127, 'active')}
            ${tab(112, 'tabpen', 10, 6, 10, 4.5, 'Employee Data', 76)}
            ${tab(111, 'tabpen', 10, 6, 10, 4.5, 'Recrt Req Data', 75.5)}
            ${tab(88, 'tabpen', 10, 6, 9.5, 4.500, 'Cand Data', 54)}
            ${tab(84, 'tabclip', 8, 12, 9.5, 4, 'Recrt Cost', 51)}
            ${tab(83, 'tabdot', 9, 9, 9, 4.500, '1. General', 50)}
            ${tab(98, 'tabdot', 9, 9, 10, 4, '2. Div &amp; Dep', 64)}
            <div style="width:28px;display:flex;align-items:center;padding-bottom:2px">${ico('tabdot', 9, 9.5)}${fit('3.', 8, 3.500)}</div>
            ${fit('...', 9, 11)}
            ${ico('plus', 14, 8)}
            <div style="margin-left:8px;font-size:10px">⋮</div>
            <div class="arr"></div><div class="thumb"></div><div class="arr r"></div>
        `;
    }
}

class StatusBar extends BaseElement {
    css() {
        return `
            :host { display: flex; align-items: center; box-sizing: border-box; height: 21px; padding-top: 2px; background: #f3f3f3; font-size: 9px; color: #333; box-shadow: inset 0 -2px #fafafa; }
            .view { display: flex; align-items: center; justify-content: center; width: 33px; height: 18px; margin-left: 15px; background: #dedede; }
            .zoom { display: flex; align-items: center; width: 82px; height: 11px; margin-left: 4px; background: linear-gradient(#999, #999) 0 5px / 82px 1px no-repeat; }
            .knob { width: 4px; height: 10px; margin-left: 28px; background: #555; }
            .mark { width: 1px; height: 5px; margin-left: 8px; background: #999; }
        `;
    }
    html() {
        return `
            ${fit('Ready', 23.5, 6)}
            ${ico('macro', 13, 16.5, 12)}
            ${ico('access', 12, 13.5)}
            ${fit('Accessibility: Investigate', 91.5, 2.5)}
            ${ico('display', 13, 762.5, 12)}
            ${fit('Display Settings', 61.5, 1.5)}
            <div class="view">${ico('gridview', 12)}</div>
            ${ico('pageview', 12, 11)}
            ${ico('breakview', 12, 22)}
            ${fit('−', 7, 15)}
            <div class="zoom"><div class="knob"></div><div class="mark"></div></div>
            ${fit('+', 7, 4)}
            ${fit('75%', 16, 11)}
        `;
    }
}

// Headline and banner that lie over the whole window
class CoverTitle extends BaseElement {
    css() {
        return `
            :host { position: absolute; inset: 0 auto auto -2px; width: 1280px; height: 720px; }
            svg { display: block; }
            .hero { font: 900 99px Inter, sans-serif; font-feature-settings: "cv11"; fill: #ff5b5b; stroke: #0b1b33; stroke-width: 8; stroke-linejoin: round; paint-order: stroke; }
            .sub { font: 800 63px Inter, sans-serif; fill: #0b1b33; stroke: #0b1b33; stroke-linejoin: round; filter: drop-shadow(2px 0 #fff) drop-shadow(-2px 0 #fff) drop-shadow(0 2px #fff) drop-shadow(0 -2px #fff); }
            .thai { font: 700 66px "Noto Sans Thai", "Noto Sans", sans-serif; }
        `;
    }
    // x of every glyph, so that its ink is centred on the given position
    positions(word, centres, stretch) {
        const ctx = document.createElement('canvas').getContext('2d');
        ctx.font = '900 99px Inter, sans-serif';
        return [...word].map((ch, i) => {
            // the single-storey a has the body of a q
            const m = ctx.measureText(ch === 'a' ? 'q' : ch);
            return (centres[i] / stretch - (m.actualBoundingBoxRight - m.actualBoundingBoxLeft) / 2).toFixed(1);
        }).join(' ');
    }
    html() {
        const word = 'HR Dashboard V2';
        const centres = [175.5, 256.5, 300, 357, 434, 506.5, 579.5, 657.5, 730, 801.5, 869.5, 932, 980, 1036.5, 1111];
        const stretch = 1.04;
        return `
            <svg width="1280" height="720" viewBox="0 0 1280 720">
                <text class="hero" transform="scale(${stretch} 1)" y="304" x="${this.positions(word, centres, stretch)}">${word}</text>
                <rect x="71.500" y="327.500" width="1135" height="135" rx="22" fill="#ffff10" fill-opacity=".94" stroke="#0b1b33" stroke-width="9"/>
                <text class="sub thai" transform="translate(107 430) scale(1.18 1)" textLength="519" stroke-width="1.800">ตั้งค่าและใส่ข้อมูล</text>
                <text class="sub" transform="translate(752 430) scale(1.12 1)" textLength="372" stroke-width="1.200">Dashboard</text>
            </svg>
        `;
    }
}

// Single-storey "a" for everything set in the dashboard face
document.documentElement.style.fontFeatureSettings = '"cv11"';

customElements.define('excel-window', ExcelWindow);
customElements.define('title-bar', TitleBar);
customElements.define('menu-tabs', MenuTabs);
customElements.define('excel-ribbon', ExcelRibbon);
customElements.define('ribbon-group', RibbonGroup);
customElements.define('big-button', BigButton);
customElements.define('formula-bar', FormulaBar);
customElements.define('work-sheet', WorkSheet);
customElements.define('sheet-tabs', SheetTabs);
customElements.define('status-bar', StatusBar);
customElements.define('cover-title', CoverTitle);
customElements.define('side-menu', SideMenu);
customElements.define('slicer-pane', SlicerPane);
customElements.define('recruit-panel', RecruitPanel);
customElements.define('termination-panel', TerminationPanel);
customElements.define('hr-card', HrCard);
customElements.define('total-value', TotalValue);
customElements.define('pipeline-chart', PipelineChart);
customElements.define('funnel-chart', FunnelChart);
customElements.define('days-chart', DaysChart);
customElements.define('rate-chart', RateChart);
customElements.define('sources-chart', SourcesChart);
customElements.define('rejected-chart', RejectedChart);
customElements.define('declined-chart', DeclinedChart);
customElements.define('monthly-chart', MonthlyChart);
customElements.define('turnover-chart', TurnoverChart);
customElements.define('reasons-chart', ReasonsChart);
customElements.define('age-chart', AgeChart);
customElements.define('service-chart', ServiceChart);
customElements.define('compare-chart', CompareChart);
customElements.define('ui-icon', UiIcon);
// last, so that every label is measured in its final place
customElements.define('fit-text', FitText);
</script>
</body>
</html>
